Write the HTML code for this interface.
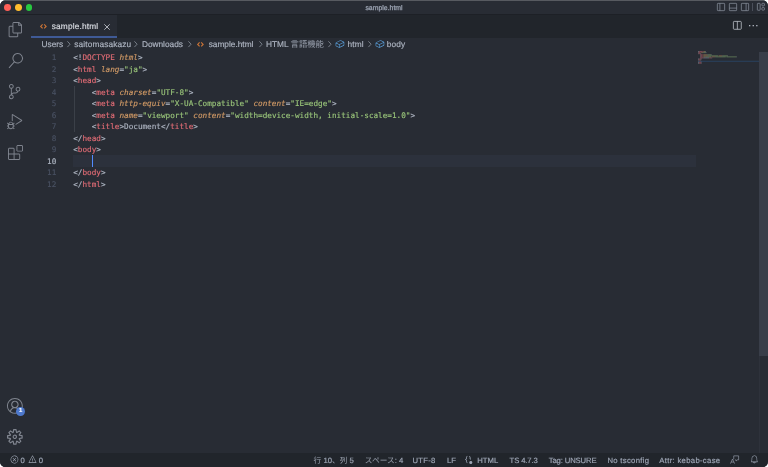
<!DOCTYPE html>
<html lang="ja">
<head>
<meta charset="UTF-8">
<title>sample.html</title>
<style>
html,body{margin:0;padding:0;background:#fff;}
body{-webkit-text-stroke:0.18px currentColor;width:768px;height:467px;overflow:hidden;position:relative;font-family:"Liberation Sans","Noto Sans CJK JP",sans-serif;text-rendering:geometricPrecision;-webkit-font-smoothing:antialiased;}
#win{will-change:transform;position:absolute;left:0;top:0;width:768px;height:467px;background:#282c34;border-radius:6px 6px 5.5px 5.5px;overflow:hidden;}
.abs{position:absolute;}
#titlebar{left:0;top:0;width:768px;height:15px;background:#282c34;border-bottom:1px solid #1d2026;box-sizing:border-box;box-shadow:inset 0 1px 0 rgba(255,255,255,0.22);}
.tl{position:absolute;top:4.1px;width:6.9px;height:6.9px;border-radius:50%;}
#title{left:0;width:768px;top:0;height:14px;line-height:17px;-webkit-text-stroke:0.25px currentColor;text-align:center;color:#9da5b4;font-size:6.9px;}
#tabbar{left:30.5px;top:15px;width:737.5px;height:22.6px;background:#21252b;}
#tab{left:0;top:0;width:86.3px;height:22.6px;background:#282c34;}
#tabline{left:0.2px;top:21px;width:86.1px;height:1.9px;background:#3f5a96;}
#tabtxt{letter-spacing:0.18px;left:21.2px;top:0;height:22.8px;line-height:23.8px;color:#d7dae0;font-size:8.3px;white-space:nowrap;}
#crumbs{left:30.5px;top:37.6px;width:737.5px;height:14.2px;background:#282c34;color:#abb2bf;font-size:8.3px;}
#crumbs span{position:absolute;top:0;line-height:13px;white-space:nowrap;}
#editor{left:30.5px;top:51.8px;width:737.5px;height:401px;background:#282c34;}
.ln{position:absolute;left:0;width:25.8px;text-align:right;color:#495162;}
.code,.ln{font-family:"DejaVu Sans Mono","Liberation Mono",monospace;font-size:7.68px;line-height:11.49px;height:11.49px;white-space:pre;margin-top:0.6px;-webkit-text-stroke:0.15px currentColor;}
.code{position:absolute;left:42.7px;color:#abb2bf;}
.t{color:#e06c75;}
.a{color:#d19a66;font-style:italic;}
.s{color:#98c379;}
#status{left:0;top:452.8px;width:768px;height:14.2px;background:#21252b;color:#9da5b4;font-size:7.7px;}
#status span{position:absolute;top:0;line-height:15.6px;white-space:nowrap;}
svg{position:absolute;overflow:visible;}
.cj{-webkit-text-stroke:0;color:#9aa1ae;}
</style>
</head>
<body>
<div id="win">
  <!-- title bar -->
  <div id="titlebar" class="abs">
    <div class="tl" style="left:4.1px;background:#fe5f57;"></div>
    <div class="tl" style="left:14.8px;background:#febc2e;"></div>
    <div class="tl" style="left:25.5px;background:#28c840;"></div>
    <div id="title" class="abs">sample.html</div>
    <svg style="left:717px;top:3.2px;" width="8" height="8" viewBox="0 0 8 8" fill="none" stroke="#8f96a3" stroke-width="0.7"><rect x="0.35" y="0.35" width="7.3" height="7.3" rx="0.7"/><path d="M2.9 0.35V7.65"/></svg>
    <svg style="left:728.9px;top:3.2px;" width="8" height="8" viewBox="0 0 8 8" fill="none" stroke="#8f96a3" stroke-width="0.7"><rect x="0.35" y="0.35" width="7.3" height="7.3" rx="0.7"/><path d="M0.35 5.1H7.65"/></svg>
    <svg style="left:740.7px;top:3.2px;" width="8" height="8" viewBox="0 0 8 8" fill="none" stroke="#8f96a3" stroke-width="0.7"><rect x="0.35" y="0.35" width="7.3" height="7.3" rx="0.7"/><path d="M5.1 0.35V7.65"/></svg>
    <div class="abs" style="left:752.3px;top:2.8px;width:0.7px;height:8.6px;background:#4a4f5a;"></div>
    <svg style="left:757.4px;top:3.4px;" width="7.8" height="7.6" viewBox="0 0 7.8 7.6" fill="none" stroke="#8f96a3" stroke-width="0.7"><rect x="0.35" y="0.35" width="2.8" height="6.9" rx="0.5"/><rect x="4.9" y="0.35" width="2.5" height="2.5" rx="0.5"/><rect x="4.9" y="4.6" width="2.5" height="2.5" rx="0.5"/></svg>

  </div>


  <!-- activity bar -->
  <div id="activity" class="abs" style="left:0;top:14.4px;width:30.5px;height:438.4px;">
    <svg style="left:7.5px;top:7.6px;" width="15.3" height="15.3" viewBox="0 0 24 24" fill="#7f848e"><path d="M17.5 0h-9L7 1.500V6H2.500L1 7.500v15.070L2.500 24h12.070L16 22.570V18h4.700l1.300-1.430V4.500L17.500 0zm0 2.120l2.380 2.380H17.500V2.120zm-3 20.380h-12v-15H7v9.070L8.500 18h6v4.500zm6-6h-12v-15H16V6h4.500v10.500z"/></svg>
    <svg style="left:7.9px;top:38.8px;" width="15.3" height="15.3" viewBox="0 0 24 24" fill="#7f848e"><path d="M15.250 0a8.250 8.250 0 0 0-6.180 13.720L1 22.880l1.120 1 8.050-9.120A8.251 8.251 0 1 0 15.250.010V0zm0 15a6.750 6.750 0 1 1 0-13.500 6.750 6.750 0 0 1 0 13.500z"/></svg>
    <svg style="left:7.3px;top:69.2px;" width="15.3" height="15.3" viewBox="0 0 24 24" fill="#7f848e"><path d="M21.007 8.222A3.738 3.738 0 0 0 15.045 5.200a3.737 3.737 0 0 0 1.156 6.583 2.988 2.988 0 0 1-2.668 1.670h-2.990a4.456 4.456 0 0 0-2.989 1.165V7.400a3.737 3.737 0 1 0-1.494 0v9.117a3.776 3.776 0 1 0 1.816.099 2.990 2.990 0 0 1 2.668-1.667h2.990a4.484 4.484 0 0 0 4.223-3.039 3.736 3.736 0 0 0 3.250-3.687zM4.565 3.738a2.242 2.242 0 1 1 4.484 0 2.242 2.242 0 0 1-4.484 0zm4.484 16.441a2.242 2.242 0 1 1-4.484 0 2.242 2.242 0 0 1 4.484 0zm8.221-9.715a2.242 2.242 0 1 1 0-4.485 2.242 2.242 0 0 1 0 4.485z"/></svg>
    <svg style="left:7.2px;top:100.1px;" width="15.3" height="15.3" viewBox="0 0 24 24" fill="#7f848e"><path d="M10.940 13.500l-1.320 1.320a3.730 3.730 0 0 0-7.240 0L1.060 13.500 0 14.560l1.720 1.720-.220.220V18H0v1.500h1.500v.080c.077.489.214.966.410 1.420L0 22.940 1.060 24l1.650-1.650A4.308 4.308 0 0 0 6 24a4.310 4.310 0 0 0 3.290-1.650L10.940 24 12 22.940 10.090 21c.198-.464.336-.951.410-1.450v-.100H12V18h-1.500v-1.500l-.220-.220L12 14.560l-1.060-1.060zM6 13.500a2.250 2.250 0 0 1 2.250 2.250h-4.500A2.250 2.250 0 0 1 6 13.500zm3 6a3.330 3.330 0 0 1-3 3 3.330 3.330 0 0 1-3-3v-2.250h6v2.250zm14.760-9.900v1.260L13.500 17.370V15.600l8.500-5.370L9 2v9.460a5.070 5.070 0 0 0-1.500-.720V.630L8.640 0l15.120 9.600z"/></svg>
    <svg style="left:7.9px;top:131.1px;" width="15" height="15" viewBox="0 0 24 24" fill="#7f848e"><path d="M13.500 1.500L15 0h7.500L24 1.500V9l-1.500 1.500H15L13.500 9V1.500zm1.500 0V9h7.500V1.500H15zM0 15V6l1.500-1.500H9L10.500 6v7.500H18l1.500 1.500v7.500L18 24H1.500L0 22.500V15zm9-1.500V6H1.500v7.500H9zM9 15H1.500v7.500H9V15zm1.500 7.500H18V15h-7.500v7.500z"/></svg>
    <svg style="left:7.4px;top:384.1px;" width="15.8" height="15.8" viewBox="0 0 16 16" fill="#7f848e"><path d="M16 7.992C16 3.580 12.416 0 8 0S0 3.580 0 7.992c0 2.430 1.104 4.620 2.832 6.090.016.016.032.016.032.032.144.112.288.224.448.336.080.048.144.111.224.175A7.980 7.980 0 0 0 8.016 16a7.980 7.980 0 0 0 4.480-1.375c.080-.048.144-.111.224-.160.144-.111.304-.223.448-.335.016-.016.032-.016.032-.032 1.696-1.487 2.800-3.676 2.800-6.106zm-8 7.001c-1.504 0-2.880-.480-4.016-1.279.016-.128.048-.255.080-.383a4.170 4.170 0 0 1 .416-.991c.176-.304.384-.576.640-.816.240-.240.528-.463.816-.639.304-.176.624-.304.976-.400A4.150 4.150 0 0 1 8 10.342a4.185 4.185 0 0 1 2.928 1.166c.368.368.656.800.864 1.295.112.288.192.592.240.911A7.030 7.030 0 0 1 8 14.993zm-2.448-7.400a2.490 2.490 0 0 1-.208-1.024c0-.351.064-.703.208-1.023.144-.320.336-.607.576-.847.240-.240.528-.431.848-.575.320-.144.672-.208 1.024-.208.368 0 .704.064 1.024.208.320.144.608.336.848.575.240.240.432.528.576.847.144.320.208.672.208 1.023 0 .368-.064.704-.208 1.023a2.840 2.840 0 0 1-.576.848 2.840 2.840 0 0 1-.848.575 2.715 2.715 0 0 1-2.064 0 2.840 2.840 0 0 1-.848-.575 2.526 2.526 0 0 1-.560-.848zm7.424 5.306c0-.032-.016-.048-.016-.080a5.220 5.220 0 0 0-.688-1.406 4.883 4.883 0 0 0-1.088-1.135 5.207 5.207 0 0 0-1.040-.608 2.820 2.820 0 0 0 .464-.383 4.200 4.200 0 0 0 .624-.784 3.624 3.624 0 0 0 .528-1.934 3.710 3.710 0 0 0-.288-1.470 3.799 3.799 0 0 0-.816-1.199 3.845 3.845 0 0 0-1.200-.800 3.720 3.720 0 0 0-1.472-.287 3.720 3.720 0 0 0-1.472.288 3.631 3.631 0 0 0-1.200.815 3.840 3.840 0 0 0-.800 1.199 3.710 3.710 0 0 0-.288 1.470c0 .352.048.688.144 1.007.096.336.224.640.400.927.160.288.384.544.624.784.144.144.304.271.480.383a5.120 5.120 0 0 0-1.040.624c-.416.320-.784.703-1.088 1.119a4.999 4.999 0 0 0-.688 1.406c-.016.032-.016.064-.016.080C1.776 11.636.992 9.910.992 7.992.992 4.140 4.144.991 8 .991s7.008 3.149 7.008 7.001a6.960 6.960 0 0 1-2.032 4.907z"/></svg>
    <div class="abs" style="left:15.8px;top:392.7px;width:9.4px;height:9.4px;border-radius:50%;background:#4d78cc;color:#f8fafd;font-size:5.8px;line-height:9.6px;text-align:center;font-weight:bold;">1</div>
    <svg style="left:7.45px;top:414.85px;" width="15.7" height="15.7" viewBox="0 0 24 24" fill="#7f848e"><path fill-rule="evenodd" d="M19.850 8.750l4.150.830v4.840l-4.150.830 2.350 3.520-3.430 3.430-3.520-2.350-.830 4.150H9.580l-.830-4.150-3.520 2.350-3.430-3.430 2.350-3.520L0 14.420V9.580l4.150-.830L1.800 5.230 5.230 1.800l3.520 2.350L9.580 0h4.840l.830 4.150 3.520-2.350 3.430 3.430-2.350 3.520zm-1.570 5.070l4-.810v-2l-4-.810-.540-1.300 2.290-3.430-1.430-1.430-3.430 2.290-1.300-.540-.810-4h-2l-.810 4-1.300.540-3.430-2.290-1.430 1.430L6.380 8.900l-.540 1.300-4 .810v2l4 .810.540 1.300-2.290 3.430 1.430 1.430 3.430-2.290 1.300.540.810 4h2l.810-4 1.300-.540 3.430 2.290 1.430-1.430-2.290-3.430.540-1.300zm-8.186-4.672A3.430 3.430 0 0 1 12 8.570 3.440 3.440 0 0 1 15.430 12a3.430 3.430 0 1 1-5.336-2.852zm.956 4.274c.281.188.612.288.950.288A1.700 1.700 0 0 0 13.710 12a1.710 1.710 0 1 0-2.660 1.422z"/></svg>
  </div>

  <!-- tab bar -->
  <div id="tabbar" class="abs">
    <div id="tab" class="abs">
      <svg style="left:9.7px;top:8.5px;" width="6.8" height="4.8" viewBox="0 0 6.8 4.8" fill="none" stroke="#cb7436" stroke-width="1.15"><path d="M2.6 0.4L0.7 2.4L2.6 4.4M4.2 0.4L6.1 2.4L4.2 4.4"/></svg><svg style="left:73.6px;top:8.5px;" width="6" height="6" viewBox="0 0 6 6" fill="none" stroke="#cfd3da" stroke-width="0.8"><path d="M0.3 0.3L5.7 5.7M5.7 0.3L0.3 5.7"/></svg>
      <div id="tabtxt" class="abs">sample.html</div>
      <div id="tabline" class="abs"></div>
    </div>
  </div>

  <div class="abs" style="left:30.5px;top:14.4px;width:737.5px;height:22.8px;">
    <svg style="left:702.2px;top:6.9px;" width="8.7" height="8.7" viewBox="0 0 8.7 8.7" fill="none" stroke="#c5cad3" stroke-width="0.75"><rect x="0.4" y="0.4" width="7.9" height="7.9" rx="0.8"/><path d="M4.35 0.4V8.3"/></svg>
    <svg style="left:718.6px;top:11.1px;" width="8.6" height="1.4" viewBox="0 0 8.6 1.4" fill="#b6bcc7"><rect x="0" y="0" width="1.3" height="1.3"/><rect x="3.6" y="0" width="1.3" height="1.3"/><rect x="7.2" y="0" width="1.3" height="1.3"/></svg>
  </div>

  <!-- breadcrumbs -->
  <div id="crumbs" class="abs">
    <svg style="left:36.4px;top:3.1px;" width="3.6" height="6.4" viewBox="0 0 3.6 6.4" fill="none" stroke="#9097a3" stroke-width="0.75"><path d="M0.4 0.3L3.1 3.2L0.4 6.1"/></svg><svg style="left:103.9px;top:3.1px;" width="3.6" height="6.4" viewBox="0 0 3.6 6.4" fill="none" stroke="#9097a3" stroke-width="0.75"><path d="M0.4 0.3L3.1 3.2L0.4 6.1"/></svg><svg style="left:157.2px;top:3.1px;" width="3.6" height="6.4" viewBox="0 0 3.6 6.4" fill="none" stroke="#9097a3" stroke-width="0.75"><path d="M0.4 0.3L3.1 3.2L0.4 6.1"/></svg><svg style="left:228.8px;top:3.1px;" width="3.6" height="6.4" viewBox="0 0 3.6 6.4" fill="none" stroke="#9097a3" stroke-width="0.75"><path d="M0.4 0.3L3.1 3.2L0.4 6.1"/></svg><svg style="left:297.7px;top:3.1px;" width="3.6" height="6.4" viewBox="0 0 3.6 6.4" fill="none" stroke="#9097a3" stroke-width="0.75"><path d="M0.4 0.3L3.1 3.2L0.4 6.1"/></svg><svg style="left:337.3px;top:3.1px;" width="3.6" height="6.4" viewBox="0 0 3.6 6.4" fill="none" stroke="#9097a3" stroke-width="0.75"><path d="M0.4 0.3L3.1 3.2L0.4 6.1"/></svg><svg style="left:304.6px;top:1.9px;" width="9.9" height="9.9" viewBox="0 0 16 16" fill="#5aa0dc"><path d="M14.450 4.500l-5-2.500h-.900l-7 3.500-.550.890v4.500l.550.900 5 2.500h.900l7-3.500.550-.900v-4.500l-.550-.890zm-8 8.640l-4.500-2.250V7.170l4.500 2v3.970zm.500-4.800L2.290 6.230l6.660-3.340 4.670 2.340-6.670 3.110zm7 1.550l-6.500 3.250V9.210l6.500-3v3.680z"/></svg><svg style="left:344.0px;top:1.9px;" width="9.9" height="9.9" viewBox="0 0 16 16" fill="#5aa0dc"><path d="M14.450 4.500l-5-2.500h-.900l-7 3.500-.550.890v4.500l.550.900 5 2.500h.900l7-3.500.550-.900v-4.500l-.550-.890zm-8 8.640l-4.500-2.250V7.170l4.500 2v3.970zm.500-4.800L2.290 6.230l6.660-3.340 4.670 2.340-6.670 3.110zm7 1.550l-6.500 3.250V9.210l6.500-3v3.680z"/></svg><svg style="left:166.5px;top:4.4px;" width="6.8" height="4.8" viewBox="0 0 6.8 4.8" fill="none" stroke="#cb7436" stroke-width="1.15"><path d="M2.6 0.4L0.7 2.4L2.6 4.4M4.2 0.4L6.1 2.4L4.2 4.4"/></svg>
    <span style="left:11px;">Users</span>
    <span style="left:43.8px;letter-spacing:0.13px;">saitomasakazu</span>
    <span style="left:111.4px;">Downloads</span>
    <span style="left:178.2px;">sample.html</span>
    <span style="left:235.5px;">HTML <i class="cj" style="font-style:normal">言語機能</i></span>
    <span style="left:317px;letter-spacing:0.12px;">html</span>
    <span style="left:356.3px;letter-spacing:0.12px;">body</span>
  </div>

  <!-- editor -->
  <div id="editor" class="abs">
    <div class="abs" style="left:42.5px;top:103.4px;width:623px;height:11.4px;background:#2c313c;"></div>
    <div class="abs" style="left:43px;top:34.5px;width:0.7px;height:46px;background:#3b4048;"></div>
    <div class="abs" style="left:61.4px;top:103.6px;width:1.3px;height:11.2px;background:#528bff;"></div>
    <div class="ln" style="top:0px;">1</div>
    <div class="ln" style="top:11.49px;">2</div>
    <div class="ln" style="top:22.98px;">3</div>
    <div class="ln" style="top:34.47px;">4</div>
    <div class="ln" style="top:45.96px;">5</div>
    <div class="ln" style="top:57.45px;">6</div>
    <div class="ln" style="top:68.94px;">7</div>
    <div class="ln" style="top:80.43px;">8</div>
    <div class="ln" style="top:91.92px;">9</div>
    <div class="ln" style="top:103.41px;color:#abb2bf;">10</div>
    <div class="ln" style="top:114.9px;">11</div>
    <div class="ln" style="top:126.39px;">12</div>
    <div class="code" style="top:0px;">&lt;!<span class="t">DOCTYPE</span> <span class="a">html</span>&gt;</div>
    <div class="code" style="top:11.49px;">&lt;<span class="t">html</span> <span class="a">lang</span>=<span class="s">"ja"</span>&gt;</div>
    <div class="code" style="top:22.98px;">&lt;<span class="t">head</span>&gt;</div>
    <div class="code" style="top:34.47px;">    &lt;<span class="t">meta</span> <span class="a">charset</span>=<span class="s">"UTF-8"</span>&gt;</div>
    <div class="code" style="top:45.96px;">    &lt;<span class="t">meta</span> <span class="a">http-equiv</span>=<span class="s">"X-UA-Compatible"</span> <span class="a">content</span>=<span class="s">"IE=edge"</span>&gt;</div>
    <div class="code" style="top:57.45px;">    &lt;<span class="t">meta</span> <span class="a">name</span>=<span class="s">"viewport"</span> <span class="a">content</span>=<span class="s">"width=device-width, initial-scale=1.0"</span>&gt;</div>
    <div class="code" style="top:68.94px;">    &lt;<span class="t">title</span>&gt;Document&lt;/<span class="t">title</span>&gt;</div>
    <div class="code" style="top:80.43px;">&lt;/<span class="t">head</span>&gt;</div>
    <div class="code" style="top:91.92px;">&lt;<span class="t">body</span>&gt;</div>
    <div class="code" style="top:114.9px;">&lt;/<span class="t">body</span>&gt;</div>
    <div class="code" style="top:126.39px;">&lt;/<span class="t">html</span>&gt;</div>
    <!-- minimap -->
    <svg style="left:667.3px;top:-0.4px;" width="62" height="14" viewBox="0 0 62 14"><rect x="0" y="9.73" width="61.2" height="1.15" fill="#293f5a"/><rect x="0.00" y="0.00" width="1.05" height="1.06" fill="#abb2bf" opacity="0.42"/><rect x="1.05" y="0.00" width="3.68" height="1.06" fill="#e06c75" opacity="0.42"/><rect x="5.25" y="0.00" width="2.10" height="1.06" fill="#d19a66" opacity="0.42"/><rect x="7.35" y="0.00" width="0.53" height="1.06" fill="#abb2bf" opacity="0.42"/><rect x="0.00" y="1.06" width="0.53" height="1.06" fill="#abb2bf" opacity="0.42"/><rect x="0.53" y="1.06" width="2.10" height="1.06" fill="#e06c75" opacity="0.42"/><rect x="3.15" y="1.06" width="2.10" height="1.06" fill="#d19a66" opacity="0.42"/><rect x="5.25" y="1.06" width="0.53" height="1.06" fill="#abb2bf" opacity="0.42"/><rect x="5.78" y="1.06" width="2.10" height="1.06" fill="#98c379" opacity="0.42"/><rect x="7.88" y="1.06" width="0.53" height="1.06" fill="#abb2bf" opacity="0.42"/><rect x="0.00" y="2.13" width="0.53" height="1.06" fill="#abb2bf" opacity="0.42"/><rect x="0.53" y="2.13" width="2.10" height="1.06" fill="#e06c75" opacity="0.42"/><rect x="2.62" y="2.13" width="0.53" height="1.06" fill="#abb2bf" opacity="0.42"/><rect x="2.10" y="3.19" width="0.53" height="1.06" fill="#abb2bf" opacity="0.42"/><rect x="2.62" y="3.19" width="2.10" height="1.06" fill="#e06c75" opacity="0.42"/><rect x="5.25" y="3.19" width="3.68" height="1.06" fill="#d19a66" opacity="0.42"/><rect x="8.93" y="3.19" width="0.53" height="1.06" fill="#abb2bf" opacity="0.42"/><rect x="9.45" y="3.19" width="3.68" height="1.06" fill="#98c379" opacity="0.42"/><rect x="13.12" y="3.19" width="0.53" height="1.06" fill="#abb2bf" opacity="0.42"/><rect x="2.10" y="4.26" width="0.53" height="1.06" fill="#abb2bf" opacity="0.42"/><rect x="2.62" y="4.26" width="2.10" height="1.06" fill="#e06c75" opacity="0.42"/><rect x="5.25" y="4.26" width="5.25" height="1.06" fill="#d19a66" opacity="0.42"/><rect x="10.50" y="4.26" width="0.53" height="1.06" fill="#abb2bf" opacity="0.42"/><rect x="11.03" y="4.26" width="8.93" height="1.06" fill="#98c379" opacity="0.42"/><rect x="20.48" y="4.26" width="3.68" height="1.06" fill="#d19a66" opacity="0.42"/><rect x="24.15" y="4.26" width="0.53" height="1.06" fill="#abb2bf" opacity="0.42"/><rect x="24.68" y="4.26" width="4.73" height="1.06" fill="#98c379" opacity="0.42"/><rect x="29.40" y="4.26" width="0.53" height="1.06" fill="#abb2bf" opacity="0.42"/><rect x="2.10" y="5.32" width="0.53" height="1.06" fill="#abb2bf" opacity="0.42"/><rect x="2.62" y="5.32" width="2.10" height="1.06" fill="#e06c75" opacity="0.42"/><rect x="5.25" y="5.32" width="2.10" height="1.06" fill="#d19a66" opacity="0.42"/><rect x="7.35" y="5.32" width="0.53" height="1.06" fill="#abb2bf" opacity="0.42"/><rect x="7.88" y="5.32" width="5.25" height="1.06" fill="#98c379" opacity="0.42"/><rect x="13.65" y="5.32" width="3.68" height="1.06" fill="#d19a66" opacity="0.42"/><rect x="17.32" y="5.32" width="0.53" height="1.06" fill="#abb2bf" opacity="0.42"/><rect x="17.85" y="5.32" width="9.97" height="1.06" fill="#98c379" opacity="0.42"/><rect x="28.35" y="5.32" width="9.97" height="1.06" fill="#98c379" opacity="0.42"/><rect x="38.33" y="5.32" width="0.53" height="1.06" fill="#abb2bf" opacity="0.42"/><rect x="2.10" y="6.39" width="0.53" height="1.06" fill="#abb2bf" opacity="0.42"/><rect x="2.62" y="6.39" width="2.62" height="1.06" fill="#e06c75" opacity="0.42"/><rect x="5.25" y="6.39" width="0.53" height="1.06" fill="#abb2bf" opacity="0.42"/><rect x="5.78" y="6.39" width="4.20" height="1.06" fill="#abb2bf" opacity="0.42"/><rect x="9.97" y="6.39" width="1.05" height="1.06" fill="#abb2bf" opacity="0.42"/><rect x="11.03" y="6.39" width="2.62" height="1.06" fill="#e06c75" opacity="0.42"/><rect x="13.65" y="6.39" width="0.53" height="1.06" fill="#abb2bf" opacity="0.42"/><rect x="0.00" y="7.46" width="1.05" height="1.06" fill="#abb2bf" opacity="0.42"/><rect x="1.05" y="7.46" width="2.10" height="1.06" fill="#e06c75" opacity="0.42"/><rect x="3.15" y="7.46" width="0.53" height="1.06" fill="#abb2bf" opacity="0.42"/><rect x="0.00" y="8.52" width="0.53" height="1.06" fill="#abb2bf" opacity="0.42"/><rect x="0.53" y="8.52" width="2.10" height="1.06" fill="#e06c75" opacity="0.42"/><rect x="2.62" y="8.52" width="0.53" height="1.06" fill="#abb2bf" opacity="0.42"/><rect x="0.00" y="10.65" width="1.05" height="1.06" fill="#abb2bf" opacity="0.42"/><rect x="1.05" y="10.65" width="2.10" height="1.06" fill="#e06c75" opacity="0.42"/><rect x="3.15" y="10.65" width="0.53" height="1.06" fill="#abb2bf" opacity="0.42"/><rect x="0.00" y="11.71" width="1.05" height="1.06" fill="#abb2bf" opacity="0.42"/><rect x="1.05" y="11.71" width="2.10" height="1.06" fill="#e06c75" opacity="0.42"/><rect x="3.15" y="11.71" width="0.53" height="1.06" fill="#abb2bf" opacity="0.42"/></svg>
    <!-- scrollbar -->
    <div class="abs" style="left:728.3px;top:0;width:0.8px;height:401px;background:#2e323b;"></div>
    <div class="abs" style="left:728.5px;top:0;width:9px;height:303.8px;background:#393e49;"></div>
  </div>

  <!-- status bar -->
  <div id="status" class="abs">
    
    <svg style="left:9.6px;top:2.4px;" width="9" height="9" viewBox="0 0 16 16" fill="#9da5b4"><path d="M8.600 1c1.600.100 3.100.900 4.200 2 1.300 1.400 2 3.100 2 5.100 0 1.600-.600 3.100-1.600 4.400-1 1.200-2.400 2.100-4 2.400-1.600.300-3.200.100-4.600-.700-1.400-.800-2.500-2-3.100-3.500C.900 9.200.800 7.500 1.300 6c.500-1.600 1.400-2.900 2.800-3.800C5.400 1.300 7 .900 8.600 1zm.500 12.900c1.300-.300 2.500-1 3.400-2.100.800-1.100 1.300-2.400 1.200-3.800 0-1.600-.600-3.200-1.700-4.300-1-1-2.200-1.600-3.600-1.700-1.300-.100-2.700.200-3.800 1-1.100.800-1.900 1.900-2.300 3.300-.400 1.300-.400 2.700.200 4 .600 1.300 1.500 2.300 2.700 3 1.200.700 2.600.900 3.900.600zM7.900 7.500L10.300 5l.700.700-2.400 2.500 2.400 2.500-.700.700-2.400-2.500-2.400 2.500-.700-.700 2.400-2.500-2.400-2.500.700-.700 2.400 2.500z"/></svg>
    <svg style="left:27.7px;top:2.3px;" width="9" height="9" viewBox="0 0 16 16" fill="#9da5b4"><path d="M7.560 1h.880l6.540 12.260-.440.740H1.440L1 13.260 7.560 1zM8 2.280L2.280 13H13.700L8 2.280zM8.625 12v-1h-1.250v1h1.250zm-1.250-2V6h1.250v4h-1.250z"/></svg>
    <svg style="left:465.2px;top:3px;" width="8.2" height="8.6" viewBox="0 0 8.2 8.6" fill="none" stroke="#9da5b4" stroke-width="0.95"><path d="M2.3 0.4C1.300 0.400 1.500 1.400 1.500 2.200S1.200 3.400 0.500 3.500C1.200 3.600 1.500 4 1.500 4.800S1.300 6.600 2.300 6.600"/><path d="M4.300 0.400C5.300 0.400 5.100 1.400 5.100 2.200S5.300 3.300 5.900 3.500"/><circle cx="5.800" cy="6.400" r="1.500" fill="#9da5b4" stroke="none"/></svg>
    <svg style="left:730.4px;top:2.6px;" width="9.2" height="9.2" viewBox="0 0 16 16" fill="none" stroke="#9da5b4" stroke-width="1.1"><path d="M6.500 7.500V1.500h8.500v7h-2.300L10.700 10.400V8.500H9"/><circle cx="5" cy="7.200" r="2.300" stroke="none" fill="none"/><path d="M0.800 15l3.600-8 3.600 8M2 12.300h4.800" /></svg>
    <svg style="left:750.1px;top:2.7px;" width="8.8" height="8.8" viewBox="0 0 16 16" fill="#9da5b4"><path d="M13.377 10.573a7.630 7.630 0 0 1-.383-2.380V6.195a5.115 5.115 0 0 0-1.268-3.446 5.138 5.138 0 0 0-3.242-1.722c-.694-.072-1.400 0-2.070.227-.670.215-1.280.574-1.794 1.053a4.923 4.923 0 0 0-1.208 1.675 5.067 5.067 0 0 0-.431 2.022v2.200a7.610 7.610 0 0 1-.383 2.370L2 12.343l.479.658h3.505c0 .526.215 1.040.586 1.412.370.370.885.586 1.412.586.526 0 1.040-.215 1.411-.586s.587-.886.587-1.412h3.505l.478-.658-.586-1.770zm-4.690 3.147a.997.997 0 0 1-.705.299.997.997 0 0 1-.706-.300.997.997 0 0 1-.300-.705h1.999a.939.939 0 0 1-.287.706zm-5.515-1.710l.371-1.114a8.633 8.633 0 0 0 .443-2.691V6.004c0-.563.120-1.113.347-1.616.227-.514.550-.969.969-1.340.419-.382.910-.670 1.436-.837.538-.180 1.100-.240 1.650-.180a4.147 4.147 0 0 1 2.597 1.400 4.133 4.133 0 0 1 1.004 2.776v2.010c0 .909.144 1.818.443 2.691l.371 1.113h-9.630v-.012z"/></svg>
    <span style="left:20.6px;">0</span>
    <span style="left:38.8px;">0</span>
    <span style="left:313.6px;"><i class="cj" style="font-style:normal">行</i> 10<i class="cj" style="font-style:normal">、列</i> 5</span>
    <span style="left:364.8px;"><i class="cj" style="font-style:normal">スペース</i>: 4</span>
    <span style="left:412.6px;letter-spacing:0.22px;">UTF-8</span>
    <span style="left:446.9px;">LF</span>
    <span style="left:477.3px;">HTML</span>
    <span style="left:509.6px;letter-spacing:-0.14px;">TS 4.7.3</span>
    <span style="left:548.7px;letter-spacing:-0.12px;">Tag: UNSURE</span>
    <span style="left:607.5px;letter-spacing:0.3px;">No tsconfig</span>
    <span style="left:659.3px;letter-spacing:0.32px;">Attr: kebab-case</span>
  </div>
</div>
</body>
</html>
